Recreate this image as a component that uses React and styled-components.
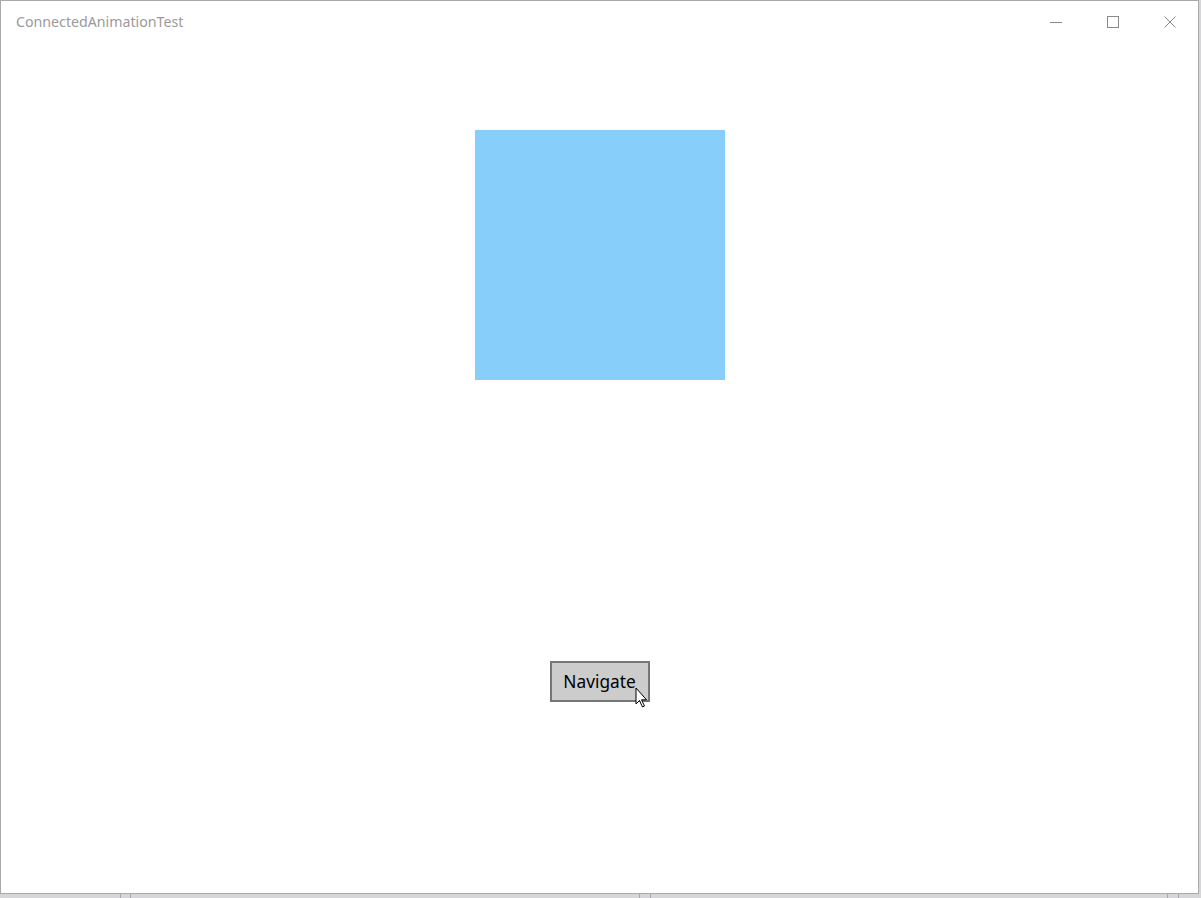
import React from "react";
import styled, { createGlobalStyle } from "styled-components";

const Global = createGlobalStyle`
  html, body { margin: 0; padding: 0; background: #d6d6d8; }
  body { font-family: "Segoe UI", "Noto Sans", "Open Sans", sans-serif; }
  #root { width: 1201px; height: 898px; overflow: hidden; }
`;

const Desktop = styled.div`
  width: 1201px;
  height: 898px;
  display: flex;
  flex-direction: column;
`;

const Window = styled.div`
  width: 1197px;
  height: 892px;
  border: 1px solid #a9a9a9;
  background: #ffffff;
  display: flex;
  flex-direction: column;
  box-sizing: content-box;
`;

const TitleBar = styled.div`
  height: 42px;
  display: flex;
  align-items: center;
  justify-content: space-between;
  padding-left: 15px;
`;

const Title = styled.span`
  font-family: "Noto Sans", sans-serif;
  font-size: 14.2px;
  color: #9a9a9a;
  margin-top: -1px;
`;

const Controls = styled.div`
  display: flex;
  height: 100%;
  align-self: flex-start;
`;

const ControlButton = styled.div`
  width: 57px;
  height: 42px;
  display: flex;
  align-items: center;
  justify-content: center;
`;

const Content = styled.div`
  flex: 1;
  display: flex;
  flex-direction: column;
  align-items: center;
  padding-top: 87px;
`;

const Square = styled.div`
  width: 250px;
  height: 250px;
  background: #87cefa;
`;

const ButtonWrap = styled.div`
  position: relative;
  margin-top: 281px;
`;

const NavButton = styled.button`
  width: 100px;
  height: 41px;
  border: 2px solid #767676;
  background: #cccccc;
  font-family: "Noto Sans", sans-serif;
  font-size: 17.3px;
  color: #000;
  padding: 0 0 1px 0;
  display: flex;
  align-items: center;
  justify-content: center;
  box-sizing: border-box;
`;

const Cursor = styled.svg`
  position: absolute;
  left: 85px;
  top: 26px;
  pointer-events: none;
`;

const Strip = styled.div`
  flex: 1;
  display: flex;
`;

const StripCell = styled.div`
  width: ${(p) => p.$w}px;
  border-right: 1px solid #a8a8b0;
`;

export default function App() {
  return (
    <>
      <Global />
      <Desktop>
        <Window>
          <TitleBar>
            <Title>ConnectedAnimationTest</Title>
            <Controls>
              <ControlButton>
                <svg width="12" height="12" viewBox="0 0 12 12">
                  <line x1="0" y1="6.5" x2="12" y2="6.5" stroke="#8a8a8a" strokeWidth="1" />
                </svg>
              </ControlButton>
              <ControlButton>
                <svg width="12" height="12" viewBox="0 0 12 12">
                  <rect x="0.5" y="0.5" width="11" height="11" fill="none" stroke="#8a8a8a" strokeWidth="1" />
                </svg>
              </ControlButton>
              <ControlButton>
                <svg width="12" height="12" viewBox="0 0 12 12">
                  <path d="M0.5 0.5 L11.5 11.5 M11.5 0.5 L0.5 11.5" stroke="#8a8a8a" strokeWidth="1" />
                </svg>
              </ControlButton>
            </Controls>
          </TitleBar>
          <Content>
            <Square />
            <ButtonWrap>
              <NavButton>Navigate</NavButton>
              <Cursor width="14" height="22" viewBox="0 0 14 22">
                <path
                  d="M1 1 L1 17 L4.5 13.5 L7.5 20 L9.5 19 L6.5 12.8 L11.5 12.8 Z"
                  fill="#ffffff"
                  stroke="#000000"
                  strokeWidth="1"
                  strokeLinejoin="miter"
                />
              </Cursor>
            </ButtonWrap>
          </Content>
        </Window>
        <Strip>
          <StripCell $w={120} />
          <StripCell $w={9} />
          <StripCell $w={508} />
          <StripCell $w={10} />
          <StripCell $w={516} />
          <StripCell $w={10} />
        </Strip>
      </Desktop>
    </>
  );
}
